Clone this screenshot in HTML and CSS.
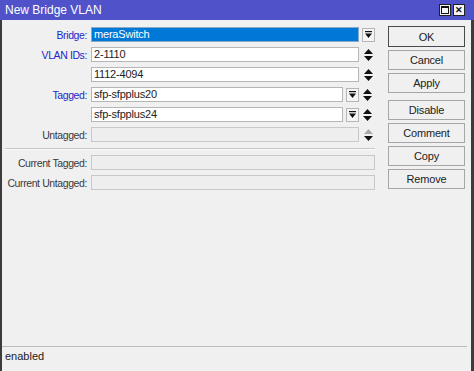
FILE: index.html
```html
<!DOCTYPE html>
<html lang="en">
<head>
  <meta charset="UTF-8" />
  <title>New Bridge VLAN</title>
  <link rel="stylesheet" href="styles.css">
</head>
<body>
  <div class="window">
    <div class="titlebar">
      <span class="title">New Bridge VLAN</span>
      <span class="tb-btn"><span class="max-box"></span></span>
      <span class="tb-btn close">&#x2715;</span>
    </div>

    <div class="content">
      <div class="form">
        <div class="row">
          <label class="lbl link">Bridge:</label>
          <div class="field selected">meraSwitch</div>
          <span class="drop"><svg width="9" height="9" viewBox="0 0 9 9"><rect x="1" y="1" width="7" height="1.2"/><path d="M1 3.5h7L4.5 8z"/></svg></span>
        </div>
        <div class="row">
          <label class="lbl link">VLAN IDs:</label>
          <div class="field">2-1110</div>
          <span class="updown"><svg width="9" height="12" viewBox="0 0 9 12"><path d="M4.5 0L9 5H0z M0 7h9L4.5 12z"/></svg></span>
        </div>
        <div class="row">
          <span class="lbl"></span>
          <div class="field">1112-4094</div>
          <span class="updown"><svg width="9" height="12" viewBox="0 0 9 12"><path d="M4.5 0L9 5H0z M0 7h9L4.5 12z"/></svg></span>
        </div>
        <div class="row">
          <label class="lbl link">Tagged:</label>
          <div class="field short">sfp-sfpplus20</div>
          <span class="drop"><svg width="9" height="9" viewBox="0 0 9 9"><rect x="1" y="1" width="7" height="1.2"/><path d="M1 3.5h7L4.5 8z"/></svg></span>
          <span class="updown"><svg width="9" height="12" viewBox="0 0 9 12"><path d="M4.5 0L9 5H0z M0 7h9L4.5 12z"/></svg></span>
        </div>
        <div class="row">
          <span class="lbl"></span>
          <div class="field short">sfp-sfpplus24</div>
          <span class="drop"><svg width="9" height="9" viewBox="0 0 9 9"><rect x="1" y="1" width="7" height="1.2"/><path d="M1 3.5h7L4.5 8z"/></svg></span>
          <span class="updown"><svg width="9" height="12" viewBox="0 0 9 12"><path d="M4.5 0L9 5H0z M0 7h9L4.5 12z"/></svg></span>
        </div>
        <div class="row">
          <label class="lbl">Untagged:</label>
          <div class="field disabled"></div>
          <span class="updown"><svg width="9" height="12" viewBox="0 0 9 12"><path class="dim" d="M4.5 0L9 5H0z"/><path d="M0 7h9L4.5 12z"/></svg></span>
        </div>

        <div class="sep"></div>

        <div class="row">
          <label class="lbl">Current Tagged:</label>
          <div class="field disabled wide"></div>
        </div>
        <div class="row">
          <label class="lbl">Current Untagged:</label>
          <div class="field disabled wide"></div>
        </div>
      </div>

      <div class="buttons">
        <button class="btn default">OK</button>
        <button class="btn">Cancel</button>
        <button class="btn">Apply</button>
        <button class="btn gap">Disable</button>
        <button class="btn">Comment</button>
        <button class="btn">Copy</button>
        <button class="btn">Remove</button>
      </div>
    </div>

    <div class="status">enabled</div>
  </div>
</body>
</html>
```

FILE: styles.css
```css
* {
  box-sizing: border-box;
  font-family: "Liberation Sans", Arial, sans-serif;
}
body {
  margin: 0;
  background: #f0f0f0;
}
.window {
  width: 474px;
  height: 371px;
  display: flex;
  flex-direction: column;
  background: #f0f0f0;
  border-left: 2px solid #3c3c3c;
  border-right: 3px solid #3c3c3c;
}
.titlebar {
  height: 20px;
  background: #4f52c9;
  display: flex;
  align-items: center;
  padding: 0 9px 0 5px;
  margin: 0 -3px 0 -2px;
}
.title {
  flex: 1;
  color: #fff;
  font-size: 12px;
}
.tb-btn {
  width: 12px;
  height: 12px;
  background: #f4f4f4;
  border: 1px solid #202020;
  margin-left: 2px;
  display: flex;
  align-items: center;
  justify-content: center;
  font-size: 9px;
  font-weight: bold;
  color: #111;
}
.max-box {
  width: 8px;
  height: 8px;
  border: 1px solid #111;
  border-top-width: 2px;
}
.content {
  display: flex;
  gap: 13px;
  padding-top: 7px;
  flex: 1;
}
.form {
  width: 373px;
  display: flex;
  flex-direction: column;
  gap: 5px;
}
.row {
  display: flex;
  align-items: center;
  height: 15px;
}
.lbl {
  width: 85px;
  flex-shrink: 0;
  margin-right: 4px;
  text-align: right;
  white-space: nowrap;
  font-size: 10.5px;
  letter-spacing: -0.4px;
  color: #3a3a3a;
}
.lbl.link { color: #2626c8; }
.field {
  width: 268px;
  height: 15px;
  flex-shrink: 0;
  border: 1px solid #b6b6b6;
  background: #fff;
  font-size: 11px;
  letter-spacing: -0.2px;
  line-height: 13px;
  padding-left: 2px;
  color: #222;
}
.field.short { width: 252px; }
.field.selected {
  background: #0078d7;
  color: #fff;
  border-color: #8aa9c6;
}
.field.disabled {
  background: #eeeeee;
  border-color: #c8c8c8;
}
.field.wide { width: 284px; }
.drop {
  width: 13px;
  height: 14px;
  flex-shrink: 0;
  border: 1px solid #b6b6b6;
  background: #f5f5f5;
  display: flex;
  align-items: center;
  justify-content: center;
  margin-left: 3px;
}
.drop svg, .updown svg { fill: #111; }
.updown {
  width: 16px;
  flex-shrink: 0;
  display: flex;
  justify-content: center;
  margin-left: 1px;
}
.field.short + .drop + .updown { margin-left: 0; }
.updown .dim { fill: #a8a8a8; }
.sep {
  height: 2px;
  background: #c8c8c8;
  border-bottom: 1px solid #fafafa;
  margin: 1px 0 0 3px;
}
.buttons {
  display: flex;
  flex-direction: column;
  gap: 3px;
  width: 77px;
  margin-top: -1px;
}
.btn {
  height: 20px;
  padding: 0;
  font-size: 11px;
  letter-spacing: -0.2px;
  color: #222;
  background: #f0f0f0;
  border: 1px solid #a6a6a6;
}
.btn.default {
  height: 21px;
  border-color: #4a4a4a;
}
.btn.gap { margin-top: 4px; }
.status {
  height: 23px;
  border-top: 1px solid #bcbcbc;
  margin: 0 4px 2px 0;
  font-size: 11px;
  color: #222;
  padding: 3px 0 0 3px;
}
```
